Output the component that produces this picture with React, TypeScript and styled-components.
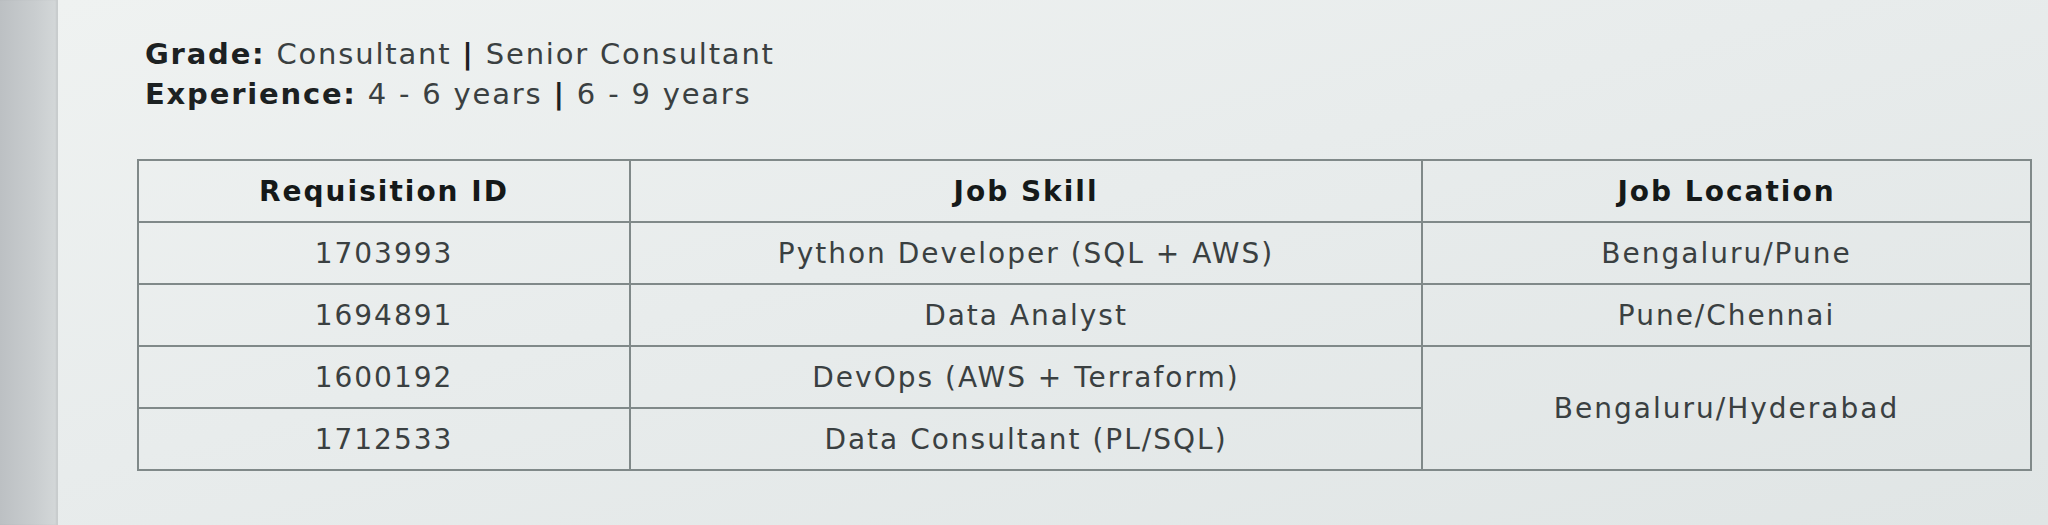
import React from 'react';
import styled, { createGlobalStyle } from 'styled-components';

const GlobalStyle = createGlobalStyle`
  body {
    margin: 0;
    background: #e4e8e8;
    font-family: 'DejaVu Sans', Verdana, sans-serif;
  }
`;

interface Job {
  id: string;
  skill: string;
  location?: string;
  locationSpan?: number;
}

const jobs: Job[] = [
  { id: '1703993', skill: 'Python Developer (SQL + AWS)', location: 'Bengaluru/Pune' },
  { id: '1694891', skill: 'Data Analyst', location: 'Pune/Chennai' },
  { id: '1600192', skill: 'DevOps (AWS + Terraform)', location: 'Bengaluru/Hyderabad', locationSpan: 2 },
  { id: '1712533', skill: 'Data Consultant (PL/SQL)' },
];

export default function App() {
  return (
    <>
      <GlobalStyle />
      <Screen>
        <Bezel />
        <Panel>
          <Info>
            <InfoLine>
              <Label>Grade:</Label> Consultant <Pipe>|</Pipe> Senior Consultant
            </InfoLine>
            <InfoLine>
              <Label>Experience:</Label> 4 - 6 years <Pipe>|</Pipe> 6 - 9 years
            </InfoLine>
          </Info>

          <JobTable>
            <colgroup>
              <col style={{ width: 492 }} />
              <col style={{ width: 792 }} />
              <col style={{ width: 609 }} />
            </colgroup>
            <thead>
              <tr>
                <HeadCell>Requisition ID</HeadCell>
                <HeadCell>Job Skill</HeadCell>
                <HeadCell>Job Location</HeadCell>
              </tr>
            </thead>
            <tbody>
              {jobs.map((job) => (
                <tr key={job.id}>
                  <Cell>{job.id}</Cell>
                  <Cell>{job.skill}</Cell>
                  {job.location && <Cell rowSpan={job.locationSpan ?? 1}>{job.location}</Cell>}
                </tr>
              ))}
            </tbody>
          </JobTable>
        </Panel>
      </Screen>
    </>
  );
}

const Screen = styled.div`
  display: flex;
  width: 2048px;
  height: 525px;
  overflow: hidden;
`;

const Bezel = styled.div`
  flex: 0 0 58px;
  background: linear-gradient(90deg, #bcc0c3 0%, #c9cdcf 60%, #d4d8d9 100%);
  box-shadow: inset -2px 0 2px rgba(0, 0, 0, 0.06);
`;

const Panel = styled.div`
  flex: 1;
  display: flex;
  flex-direction: column;
  padding: 34px 0 0 79px;
  background: linear-gradient(165deg, #eff2f1 0%, #e8ecec 45%, #e0e5e5 100%);
`;

const Info = styled.div`
  padding-left: 8px;
  font-size: 29px;
  line-height: 40px;
  letter-spacing: 1.8px;
  color: #3a4041;
`;

const InfoLine = styled.div`
  white-space: nowrap;
`;

const Label = styled.b`
  font-weight: 700;
  color: #1c2122;
`;

const Pipe = styled.b`
  font-weight: 700;
  color: #1c2122;
`;

const JobTable = styled.table`
  margin-top: 45px;
  width: 1893px;
  table-layout: fixed;
  border-collapse: collapse;
  border: 2px solid #808989;
  font-size: 28px;
  letter-spacing: 2px;
`;

const HeadCell = styled.th`
  height: 60px;
  padding: 0;
  border: 2px solid #808989;
  text-align: center;
  vertical-align: middle;
  font-weight: 700;
  color: #151919;
`;

const Cell = styled.td`
  height: 60px;
  padding: 0;
  border: 2px solid #808989;
  text-align: center;
  vertical-align: middle;
  color: #3a4041;
`;
